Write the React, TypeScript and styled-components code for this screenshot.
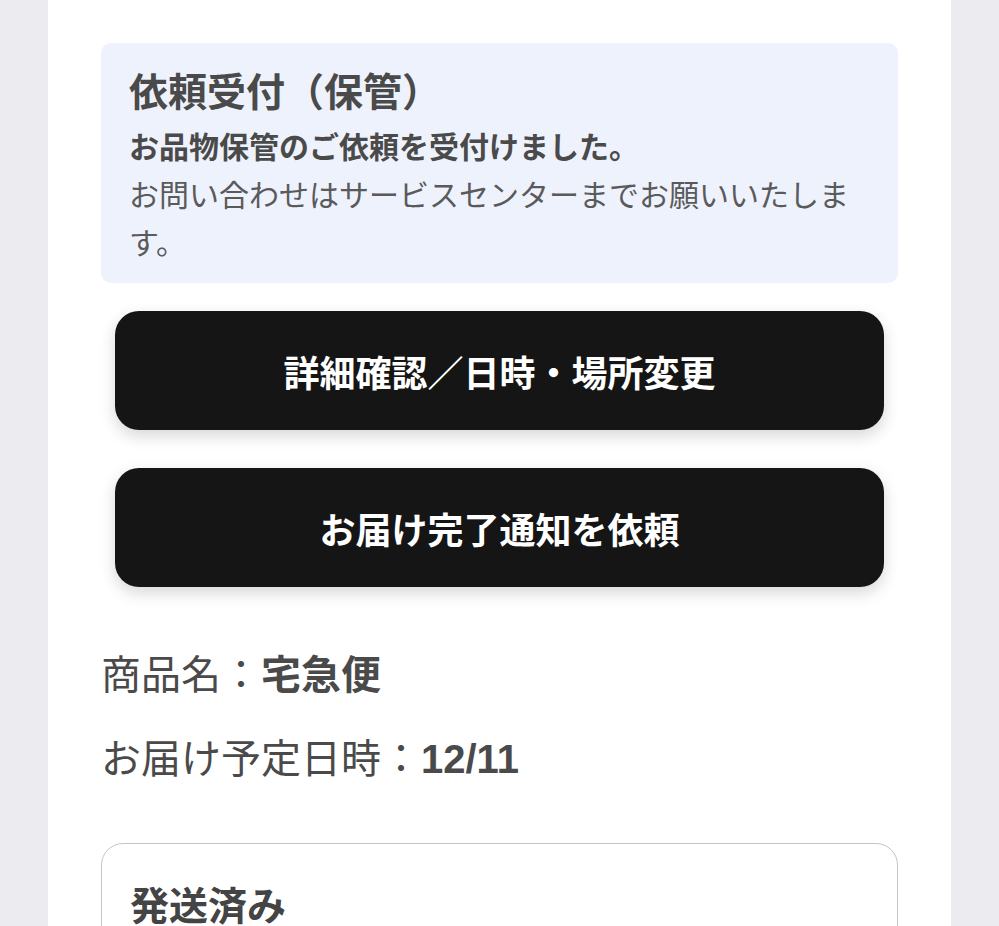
import React from "react";
import styled, { createGlobalStyle } from "styled-components";

const GlobalStyle = createGlobalStyle`
  html, body {
    margin: 0;
    padding: 0;
    background: #ebebf0;
  }
  body {
    font-family: Inter, "Noto Sans CJK JP", sans-serif;
    color: #484848;
  }
`;

const Page = styled.div`
  min-height: 100vh;
  background: #ebebf0;
`;

const Panel = styled.main`
  width: 903px;
  margin: 0 auto;
  min-height: 100vh;
  background: #ffffff;
  padding: 43px 53px 0;
  box-sizing: border-box;
`;

const InfoBox = styled.section`
  background: #eef2fd;
  border-radius: 10px;
  padding: 21px 28px 16px;
`;

const InfoTitle = styled.h2`
  margin: 0 0 3px;
  font-size: 39px;
  line-height: 56px;
  font-weight: 700;
  color: #4a4a4a;
`;

const InfoText = styled.p<{ $bold?: boolean }>`
  margin: 0;
  font-size: 30px;
  line-height: 48px;
  font-weight: ${(p) => (p.$bold ? 700 : 400)};
  color: ${(p) => (p.$bold ? "#4a4a4a" : "#5a5a5a")};
`;

const ButtonStack = styled.div`
  display: flex;
  flex-direction: column;
  gap: 38px;
  margin: 28px 14px 0;
`;

const ActionButton = styled.button`
  height: 119px;
  border: none;
  border-radius: 24px;
  background: #151515;
  color: #ffffff;
  font-family: Inter, "Noto Sans CJK JP", sans-serif;
  font-size: 36px;
  font-weight: 700;
  box-shadow: 0 6px 16px rgba(0, 0, 0, 0.16);
  cursor: pointer;
`;

const DetailList = styled.dl`
  display: flex;
  flex-direction: column;
  gap: 26px;
  margin: 59px 0 0;
`;

const DetailRow = styled.div`
  display: flex;
  font-family: "Liberation Sans", "Noto Sans CJK JP", sans-serif;
  font-size: 40px;
  line-height: 58px;
  color: #4a4a4a;
`;

const Label = styled.dt`
  margin: 0;
  font-weight: 400;
`;

const Value = styled.dd`
  margin: 0;
  font-weight: 700;
`;

const StatusCard = styled.section`
  margin-top: 55px;
  border: 1px solid #c4c4c4;
  border-radius: 22px;
  padding: 34px 28px;
  min-height: 200px;
`;

const StatusTitle = styled.h3`
  margin: 0;
  font-size: 39px;
  line-height: 56px;
  font-weight: 700;
  color: #444444;
`;

export default function App() {
  return (
    <Page>
      <GlobalStyle />
      <Panel>
        <InfoBox>
          <InfoTitle>依頼受付（保管）</InfoTitle>
          <InfoText $bold>お品物保管のご依頼を受付けました。</InfoText>
          <InfoText>お問い合わせはサービスセンターまでお願いいたします。</InfoText>
        </InfoBox>

        <ButtonStack>
          <ActionButton>詳細確認／日時・場所変更</ActionButton>
          <ActionButton>お届け完了通知を依頼</ActionButton>
        </ButtonStack>

        <DetailList>
          <DetailRow>
            <Label>商品名：</Label>
            <Value>宅急便</Value>
          </DetailRow>
          <DetailRow>
            <Label>お届け予定日時：</Label>
            <Value>12/11</Value>
          </DetailRow>
        </DetailList>

        <StatusCard>
          <StatusTitle>発送済み</StatusTitle>
        </StatusCard>
      </Panel>
    </Page>
  );
}
